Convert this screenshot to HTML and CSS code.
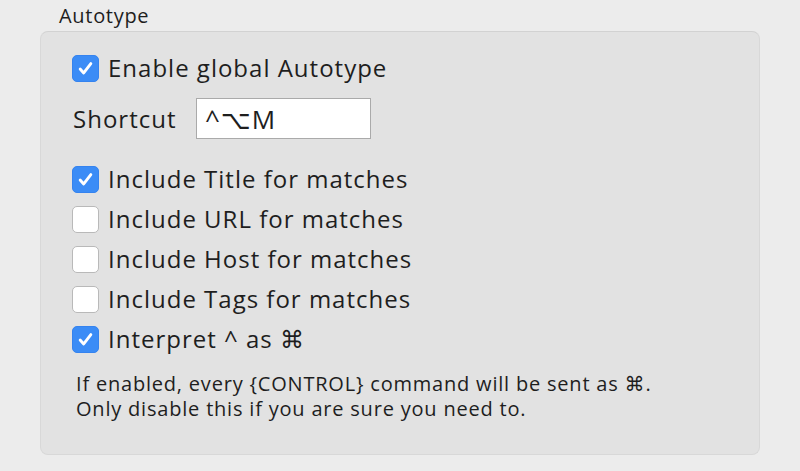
FILE: index.html
```html
<!DOCTYPE html>
<html lang="en">
<head>
  <meta charset="UTF-8" />
  <title>Autotype</title>
  <link rel="stylesheet" href="styles.css">
</head>
<body>
  <div class="group-title">Autotype</div>
  <div class="box">
    <label class="row">
      <span class="check on"><svg viewBox="0 0 28 28"><path d="M8 14.5l4 4.5 8-10.5" /></svg></span>
      <span class="text">Enable global Autotype</span>
    </label>

    <div class="shortcut">
      <span class="shortcut-label">Shortcut</span>
      <div class="field">^⌥M</div>
    </div>

    <div class="options">
      <label class="row">
        <span class="check on"><svg viewBox="0 0 28 28"><path d="M8 14.5l4 4.5 8-10.5" /></svg></span>
        <span class="text">Include Title for matches</span>
      </label>
      <label class="row">
        <span class="check"></span>
        <span class="text">Include URL for matches</span>
      </label>
      <label class="row">
        <span class="check"></span>
        <span class="text">Include Host for matches</span>
      </label>
      <label class="row">
        <span class="check"></span>
        <span class="text">Include Tags for matches</span>
      </label>
      <label class="row">
        <span class="check on"><svg viewBox="0 0 28 28"><path d="M8 14.5l4 4.5 8-10.5" /></svg></span>
        <span class="text">Interpret ^ as ⌘</span>
      </label>
    </div>

    <p class="note">If enabled, every {CONTROL} command will be sent as ⌘.<br>Only disable this if you are sure you need to.</p>
  </div>
</body>
</html>
```

FILE: styles.css
```css
body {
  margin: 0;
  background: #ececec;
  font-family: 'Open Sans', 'DejaVu Sans', sans-serif;
  color: #1e1e1e;
}
.group-title {
  height: 31px;
  padding-left: 59px;
  font-size: 20px;
  letter-spacing: 0.7px;
  line-height: 32px;
}
.box {
  margin: 0 40px;
  height: 424px;
  box-sizing: border-box;
  background: #e2e2e2;
  border: 1px solid #d8d8d8;
  border-top-color: #d2d2d2;
  border-radius: 8px;
  padding: 16px 31px 0;
}
.row {
  display: flex;
  align-items: center;
  gap: 9px;
  height: 40px;
  font-size: 24px;
  letter-spacing: 1px;
}
.row .text {
  margin-top: -2px;
}
.check {
  width: 27px;
  height: 27px;
  flex: none;
  box-sizing: border-box;
  border: 1px solid #b9b9b9;
  border-radius: 5px;
  background: #fff;
  display: flex;
}
.check.on {
  background: #3b8cf6;
  border-color: #3583ef;
}
.check svg {
  width: 100%;
  height: 100%;
  fill: none;
  stroke: #fff;
  stroke-width: 3.2;
  stroke-linecap: round;
  stroke-linejoin: round;
}
.shortcut {
  display: flex;
  align-items: center;
  margin-top: 10px;
  height: 41px;
}
.shortcut-label {
  width: 123px;
  padding-left: 1px;
  font-size: 24px;
  letter-spacing: 1px;
}
.field {
  width: 175px;
  height: 41px;
  box-sizing: border-box;
  background: #fff;
  border: 1px solid #aaaaaa;
  padding-left: 8px;
  font-size: 26px;
  letter-spacing: 1px;
  line-height: 40px;
}
.options {
  margin-top: 20px;
}
.note {
  margin: 12px 0 0 4px;
  font-size: 20px;
  letter-spacing: 0.8px;
  line-height: 25px;
}
```
